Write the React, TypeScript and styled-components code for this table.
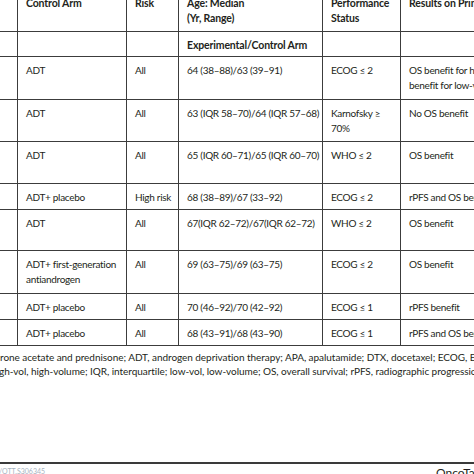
import styled, { createGlobalStyle } from 'styled-components';

const GlobalStyle = createGlobalStyle`
  html, body {
    margin: 0;
    padding: 0;
    background: #ffffff;
  }
  body {
    font-family: Lato, "Open Sans", sans-serif;
    color: #231f20;
  }
`;

interface RowProps {
  $h: number;
}

interface ColProps {
  $w: number;
}

const rows = [
  { control: ['ADT'], risk: 'All', age: '64 (38–88)/63 (39–91)', ps: ['ECOG ≤ 2'], result: ['OS benefit for high-vol, no OS', 'benefit for low-vol'], h: 43 },
  { control: ['ADT'], risk: 'All', age: '63 (IQR 58–70)/64 (IQR 57–68)', ps: ['Karnofsky ≥', '70%'], result: ['No OS benefit'], h: 42 },
  { control: ['ADT'], risk: 'All', age: '65 (IQR 60–71)/65 (IQR 60–70)', ps: ['WHO ≤ 2'], result: ['OS benefit'], h: 42 },
  { control: ['ADT+ placebo'], risk: 'High risk', age: '68 (38–89)/67 (33–92)', ps: ['ECOG ≤ 2'], result: ['rPFS and OS benefit'], h: 26 },
  { control: ['ADT'], risk: 'All', age: '67(IQR 62–72)/67(IQR 62–72)', ps: ['WHO ≤ 2'], result: ['OS benefit'], h: 41 },
  { control: ['ADT+ first-generation', 'antiandrogen'], risk: 'All', age: '69 (63–75)/69 (63–75)', ps: ['ECOG ≤ 2'], result: ['OS benefit'], h: 43 },
  { control: ['ADT+ placebo'], risk: 'All', age: '70 (46–92)/70 (42–92)', ps: ['ECOG ≤ 1'], result: ['rPFS benefit'], h: 26 },
  { control: ['ADT+ placebo'], risk: 'All', age: '68 (43–91)/68 (43–90)', ps: ['ECOG ≤ 1'], result: ['rPFS and OS benefit'], h: 26 },
];

function Lines({ items }: { items: string[] }) {
  return (
    <>
      {items.map((t, i) => (
        <span key={i}>
          {i > 0 && <br />}
          {t}
        </span>
      ))}
    </>
  );
}

export default function App() {
  return (
    <>
      <GlobalStyle />
      <Page>
        <TableClip>
          <Table>
            <colgroup>
              <Col $w={90} />
              <Col $w={109} />
              <Col $w={52} />
              <Col $w={144} />
              <Col $w={78} />
              <Col $w={180} />
            </colgroup>
            <thead>
              <Row $h={42}>
                <Head>Experimental</Head>
                <Head>Control Arm</Head>
                <Head>Risk</Head>
                <Head>
                  Age: Median
                  <br />
                  (Yr, Range)
                </Head>
                <Head>
                  Performance
                  <br />
                  Status
                </Head>
                <Head>Results on Primary Endpoint</Head>
              </Row>
              <Row $h={25}>
                <Head />
                <Head />
                <Head />
                <Head>Experimental/Control Arm</Head>
                <Head />
                <Head />
              </Row>
            </thead>
            <tbody>
              {rows.map((r, i) => (
                <Row key={i} $h={r.h}>
                  <Cell />
                  <Cell>
                    <Lines items={r.control} />
                  </Cell>
                  <Cell>{r.risk}</Cell>
                  <Cell>{r.age}</Cell>
                  <Cell>
                    <Lines items={r.ps} />
                  </Cell>
                  <Cell>
                    <Lines items={r.result} />
                  </Cell>
                </Row>
              ))}
            </tbody>
          </Table>
        </TableClip>
        <Notes>
          <NoteLine>
            rone acetate and prednisone; ADT, androgen deprivation therapy; APA, apalutamide; DTX, docetaxel; ECOG, Eastern Cooperative Oncology Group;
          </NoteLine>
          <NoteLine $shift={-1}>
            gh-vol, high-volume; IQR, interquartile; low-vol, low-volume; OS, overall survival; rPFS, radiographic progression-free survival.
          </NoteLine>
        </Notes>
        <Spacer />
        <Footer>
          <Doi>/OTT.S306345</Doi>
          <Journal>OncoTargets and Therapy</Journal>
        </Footer>
      </Page>
    </>
  );
}

const Page = styled.div`
  width: 474px;
  height: 474px;
  overflow: hidden;
  display: flex;
  flex-direction: column;
`;

const TableClip = styled.div`
  width: 474px;
  overflow: hidden;
  margin-top: -11px;
  flex-shrink: 0;
`;

const Table = styled.table`
  border-collapse: collapse;
  table-layout: fixed;
  width: 653px;
  margin-left: -73px;
  font-size: 10px;
  line-height: 15px;
`;

const Col = styled.col<ColProps>`
  width: ${p => p.$w}px;
`;

const Row = styled.tr<RowProps>`
  height: ${p => p.$h}px;
`;

const Head = styled.th`
  border: 1px solid #3c3c3c;
  padding: 6px 8px 3px;
  text-align: left;
  vertical-align: top;
  font-size: 10.5px;
  font-weight: 700;
  letter-spacing: -0.15px;
  white-space: nowrap;
  overflow: hidden;
`;

const Cell = styled.td`
  border: 1px solid #3c3c3c;
  padding: 6px 8px 3px;
  text-align: left;
  vertical-align: top;
  font-weight: 400;
  letter-spacing: -0.3px;
  white-space: nowrap;
  overflow: hidden;
`;

const Notes = styled.div`
  padding-top: 4px;
  font-size: 10px;
  line-height: 14px;
  letter-spacing: -0.05px;
`;

const NoteLine = styled.div<{ $shift?: number }>`
  white-space: nowrap;
  margin-left: ${p => p.$shift ?? 0}px;
`;

const Spacer = styled.div`
  flex: 1;
`;

const Footer = styled.div`
  height: 10px;
  flex-shrink: 0;
  border-top: 2px solid #3a3a3a;
  display: flex;
  justify-content: space-between;
  align-items: flex-start;
`;

const Doi = styled.span`
  font-size: 7px;
  line-height: 10px;
  color: #a7b3bf;
  padding-top: 2px;
  margin-left: -1px;
`;

const Journal = styled.span`
  font-size: 12px;
  line-height: 14px;
  color: #231f20;
  white-space: nowrap;
  width: 38px;
  padding-top: 2px;
  overflow: visible;
`;
